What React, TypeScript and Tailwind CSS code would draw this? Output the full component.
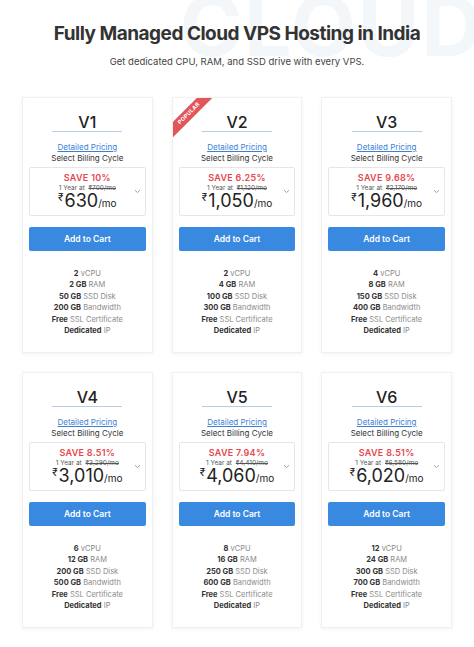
// Cloud VPS pricing grid

type Plan = {
  name: string;
  save: string;
  oldPrice: string;
  price: string;
  cpu: string;
  ram: string;
  disk: string;
  bandwidth: string;
  popular?: boolean;
};

const plans: Plan[] = [
  { name: 'V1', save: 'SAVE 10%', oldPrice: '₹700/mo', price: '630', cpu: '2', ram: '2 GB', disk: '50 GB', bandwidth: '200 GB' },
  { name: 'V2', save: 'SAVE 6.25%', oldPrice: '₹1,120/mo', price: '1,050', cpu: '2', ram: '4 GB', disk: '100 GB', bandwidth: '300 GB', popular: true },
  { name: 'V3', save: 'SAVE 9.68%', oldPrice: '₹2,170/mo', price: '1,960', cpu: '4', ram: '8 GB', disk: '150 GB', bandwidth: '400 GB' },
  { name: 'V4', save: 'SAVE 8.51%', oldPrice: '₹3,290/mo', price: '3,010', cpu: '6', ram: '12 GB', disk: '200 GB', bandwidth: '500 GB' },
  { name: 'V5', save: 'SAVE 7.94%', oldPrice: '₹4,410/mo', price: '4,060', cpu: '8', ram: '16 GB', disk: '250 GB', bandwidth: '600 GB' },
  { name: 'V6', save: 'SAVE 8.51%', oldPrice: '₹6,580/mo', price: '6,020', cpu: '12', ram: '24 GB', disk: '300 GB', bandwidth: '700 GB' },
];

function Chevron() {
  return (
    <svg width="7" height="5" viewBox="0 0 7 5" className="absolute right-[4px] top-[21px]">
      <path d="M1 1.2 L3.5 3.6 L6 1.2" fill="none" stroke="#9aa3ad" strokeWidth="1" />
    </svg>
  );
}

function PlanCard({ plan }: { plan: Plan }) {
  return (
    <div className="relative h-[256px] bg-white border border-[#f0f0f0] shadow-[0_1px_4px_rgba(0,0,0,0.05)] overflow-hidden flex flex-col items-center px-[6px]">
      {/* Popular ribbon */}
      {plan.popular && (
        <div className="absolute left-[-21px] top-[10px] w-[74px] h-[11px] bg-[#e2555b] -rotate-45 flex items-center justify-center">
          <span className="text-[5.5px] font-bold text-white tracking-[0.3px] leading-none">POPULAR</span>
        </div>
      )}

      {/* Title */}
      <div className="mt-[16px] text-[16px] font-medium text-[#222] leading-[16px]">{plan.name}</div>
      <div className="w-[70px] h-px bg-[#b9cde2] mt-[1px]" />

      <a className="mt-[10px] text-[8px] text-[#3b7fd4] underline leading-[10px]">Detailed Pricing</a>
      <div className="mt-[1px] text-[8px] text-[#333] leading-[10px]">Select Billing Cycle</div>

      {/* Billing select */}
      <div className="relative mt-[4px] w-full h-[49px] border border-[#e6e6e6] rounded-[2px] flex flex-col items-center">
        <div className="mt-[5px] text-[9px] font-semibold text-[#e8464e] leading-[10px] tracking-[0.3px]">{plan.save}</div>
        <div className="mt-[1px] text-[6.5px] text-[#555] leading-[9px]">
          1 Year at <span className="line-through ml-[2px]">{plan.oldPrice}</span>
        </div>
        <div className="flex items-baseline text-[#222] leading-none -mt-[1px]">
          <span className="text-[10px] relative -top-[6px] mr-[1px]">₹</span>
          <span className="text-[18px]">{plan.price}</span>
          <span className="text-[10px]">/mo</span>
        </div>
        <Chevron />
      </div>

      <button className="mt-[11px] w-full h-[24px] bg-[#3a89e0] rounded-[2px] text-white text-[8.5px] font-semibold">
        Add to Cart
      </button>

      {/* Features */}
      <ul className="mt-[17px] flex flex-col items-center text-[7.5px] leading-[11.4px] text-[#8a8a8a]">
        <li><b className="text-[#333]">{plan.cpu}</b> vCPU</li>
        <li><b className="text-[#333]">{plan.ram}</b> RAM</li>
        <li><b className="text-[#333]">{plan.disk}</b> SSD Disk</li>
        <li><b className="text-[#333]">{plan.bandwidth}</b> Bandwidth</li>
        <li><b className="text-[#333]">Free</b> SSL Certificate</li>
        <li><b className="text-[#333]">Dedicated</b> IP</li>
      </ul>
    </div>
  );
}

export default function App() {
  return (
    <div className="relative w-[474px] min-h-[647px] bg-white overflow-hidden font-['Inter','Liberation_Sans',sans-serif]">
      {/* Background word */}
      <div className="absolute right-[-10px] top-[-16px] text-[84px] font-bold text-[#f3f7fa] leading-none tracking-[2px] select-none">
        CLOUD
      </div>

      <div className="relative">
        <h1 className="pt-[22px] text-center text-[19px] font-bold text-[#333] leading-[24px] tracking-[-0.5px]">
          Fully Managed Cloud VPS Hosting in India
        </h1>
        <p className="mt-[10px] text-center text-[9.5px] text-[#444] leading-[12px]">
          Get dedicated CPU, RAM, and SSD drive with every VPS.
        </p>

        <div className="mt-[29px] px-[22px] grid grid-cols-3 gap-x-[19px] gap-y-[19px]">
          {plans.map((plan) => (
            <PlanCard key={plan.name} plan={plan} />
          ))}
        </div>
      </div>
    </div>
  );
}
